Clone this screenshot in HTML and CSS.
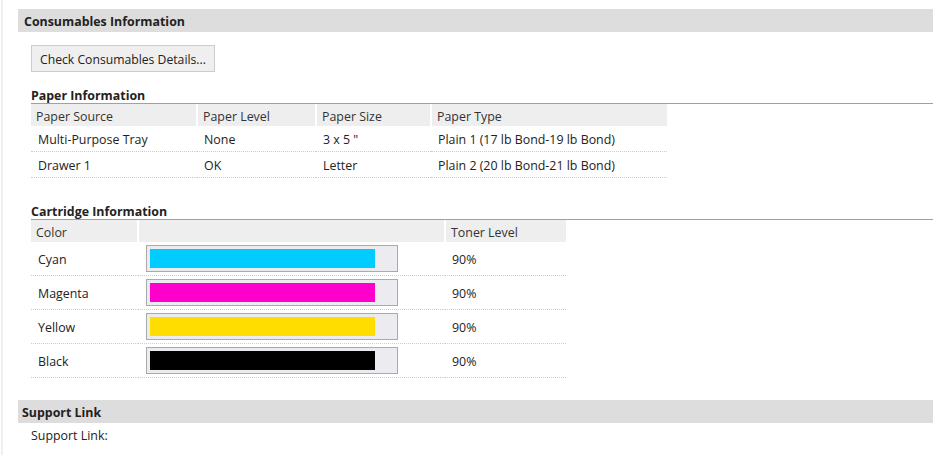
FILE: index.html
```html
<!DOCTYPE html>
<html>
<head>
<meta charset="utf-8">
<link rel="stylesheet" href="styles.css">
</head>
<body>
<div class="page">
  <section class="section">
    <h2 class="section-title">Consumables Information</h2>
    <div class="section-body">
      <button class="btn" type="button">Check Consumables Details...</button>

      <h3 class="sub-title">Paper Information</h3>
      <table class="grid paper">
        <thead>
          <tr><th class="c-src">Paper Source</th><th class="c-lvl">Paper Level</th><th class="c-size">Paper Size</th><th class="c-type">Paper Type</th></tr>
        </thead>
        <tbody>
          <tr><td>Multi-Purpose Tray</td><td>None</td><td>3 x 5 "</td><td>Plain 1 (17 lb Bond-19 lb Bond)</td></tr>
          <tr><td>Drawer 1</td><td>OK</td><td>Letter</td><td>Plain 2 (20 lb Bond-21 lb Bond)</td></tr>
        </tbody>
      </table>

      <h3 class="sub-title sub-title-2">Cartridge Information</h3>
      <table class="grid cart">
        <thead>
          <tr><th class="c-color">Color</th><th class="c-bar"></th><th class="c-toner">Toner Level</th></tr>
        </thead>
        <tbody>
          <tr><td>Cyan</td><td class="bar-cell"><div class="track"><div class="fill cyan" style="width:225px"></div></div></td><td>90%</td></tr>
          <tr><td>Magenta</td><td class="bar-cell"><div class="track"><div class="fill magenta" style="width:225px"></div></div></td><td>90%</td></tr>
          <tr><td>Yellow</td><td class="bar-cell"><div class="track"><div class="fill yellow" style="width:225px"></div></div></td><td>90%</td></tr>
          <tr><td>Black</td><td class="bar-cell"><div class="track"><div class="fill black" style="width:225px"></div></div></td><td>90%</td></tr>
        </tbody>
      </table>
    </div>
  </section>

  <section class="section section-support">
    <h2 class="section-title title-support">Support Link</h2>
    <div class="section-body">
      <div class="support-line">Support Link:</div>
    </div>
  </section>
</div>
</body>
</html>
```

FILE: styles.css
```css
html, body {
  margin: 0;
  padding: 0;
  background: #fff;
}
body {
  font-family: "Open Sans", "Noto Sans", sans-serif;
  font-size: 12.4px;
  color: #222;
}
.page {
  margin-left: 1px;
  border-left: 2px solid #efefef;
  padding-left: 15px;
  min-height: 455px;
  box-sizing: border-box;
  padding-top: 9px;
}
.section-title {
  margin: 0;
  height: 23px;
  line-height: 25px;
  background: #dddddd;
  padding-left: 6px;
  font-size: 12.4px;
  font-weight: 700;
  color: #222;
}
.title-support {
  padding-left: 4px;
}
.section-body {
  padding-left: 13px;
}
.btn {
  display: block;
  margin-top: 13px;
  height: 27px;
  width: 184px;
  padding: 1px 0 0 8px;
  text-align: left;
  background: #efefef;
  border: 1px solid #cccccc;
  font-family: inherit;
  font-size: 12.2px;
  color: #222;
}
.sub-title {
  margin: 12px 0 0 0;
  height: 19px;
  line-height: 24px;
  border-bottom: 1px solid #a0a0a0;
  font-size: 12.4px;
  font-weight: 700;
  color: #222;
}
.sub-title-2 {
  margin-top: 22px;
}
.grid {
  border-collapse: collapse;
  border-spacing: 0;
}
.grid th {
  box-sizing: border-box;
  background: #eeeeee;
  height: 22px;
  padding: 2px 0 0 5px;
  text-align: left;
  font-weight: 400;
  color: #333;
  border-left: 2px solid #fff;
}
.grid th:first-child {
  border-left: 0;
}
.grid td {
  padding: 2px 0 0 7px;
  border-bottom: 1px dotted #cccccc;
  color: #222;
}
.paper td {
  height: 23px;
}
.c-src { width: 166px; }
.c-lvl { width: 119px; }
.c-size { width: 115px; }
.c-type { width: 236px; }
.cart td {
  height: 31px;
}
.c-color { width: 107px; }
.c-bar { width: 307px; }
.c-toner { width: 121px; }
.grid td.bar-cell {
  padding: 0 0 0 8px;
}
.track {
  width: 252px;
  height: 27px;
  box-sizing: border-box;
  border: 1px solid #aaaaaa;
  background: #ebebf0;
  padding: 3px;
}
.fill {
  height: 19px;
}
.cyan { background: #00ccff; }
.magenta { background: #ff00cc; }
.yellow { background: #ffdd00; }
.black { background: #000000; }
.section-support {
  margin-top: 22px;
}
.support-line {
  height: 24px;
  line-height: 26px;
}
```
